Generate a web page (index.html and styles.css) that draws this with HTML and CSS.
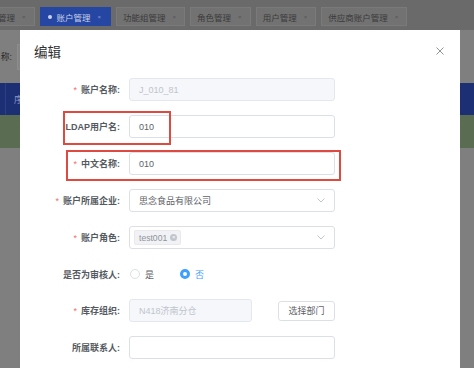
FILE: index.html
```html
<!DOCTYPE html>
<html lang="zh-CN">
<head>
    <meta charset="UTF-8">
    <title>账户管理 - 编辑</title>
    <link rel="stylesheet" href="styles.css">
</head>
<body>
    <div class="app">
        <div class="tabs">
            <div class="tab tab-cut">权限管理<span class="tab-close">×</span></div>
            <div class="tab active"><span class="dot"></span>账户管理<span class="tab-close">×</span></div>
            <div class="tab">功能组管理<span class="tab-close">×</span></div>
            <div class="tab">角色管理<span class="tab-close">×</span></div>
            <div class="tab">用户管理<span class="tab-close">×</span></div>
            <div class="tab">供应商账户管理<span class="tab-close">×</span></div>
        </div>
        <div class="toolbar">
            <span class="toolbar-label">名称:</span>
            <span class="toolbar-input"></span>
        </div>
        <div class="thead">
            <span class="th-first"></span>
            <span class="th">序号</span>
        </div>
        <div class="trow"></div>
    </div>

    <div class="dialog">
        <div class="dialog-header">
            <span class="dialog-title">编辑</span>
            <svg class="dialog-close" width="8" height="8" viewBox="0 0 8 8">
                <path d="M0.5 0.5 L7.5 7.5 M7.5 0.5 L0.5 7.5" stroke="#909399" stroke-width="1" fill="none"/>
            </svg>
        </div>
        <form class="form">
            <div class="row">
                <label class="label req">账户名称:</label>
                <input class="input" type="text" value="J_010_81" disabled>
            </div>
            <div class="row">
                <label class="label">LDAP用户名:</label>
                <input class="input" type="text" value="010">
            </div>
            <div class="row">
                <label class="label req">中文名称:</label>
                <input class="input" type="text" value="010">
            </div>
            <div class="row">
                <label class="label req">账户所属企业:</label>
                <div class="select">
                    <span class="select-text">思念食品有限公司</span>
                    <svg class="arrow" width="8" height="5" viewBox="0 0 8 5">
                        <polyline points="0.5,0.5 4,4 7.5,0.5" stroke="#c0c4cc" stroke-width="1" fill="none"/>
                    </svg>
                </div>
            </div>
            <div class="row">
                <label class="label req">账户角色:</label>
                <div class="select select-tags">
                    <span class="tag">test001<span class="tag-close">×</span></span>
                    <svg class="arrow" width="8" height="5" viewBox="0 0 8 5">
                        <polyline points="0.5,0.5 4,4 7.5,0.5" stroke="#c0c4cc" stroke-width="1" fill="none"/>
                    </svg>
                </div>
            </div>
            <div class="row row-radio">
                <label class="label">是否为审核人:</label>
                <span class="radio"><span class="radio-dot"></span>是</span>
                <span class="radio checked"><span class="radio-dot"></span>否</span>
            </div>
            <div class="row">
                <label class="label req">库存组织:</label>
                <input class="input input-short" type="text" value="N418济南分仓" disabled>
                <button class="btn" type="button">选择部门</button>
            </div>
            <div class="row">
                <label class="label">所属联系人:</label>
                <input class="input" type="text" value="">
            </div>
        </form>
    </div>

    <div class="mark mark-ldap"></div>
    <div class="mark mark-name"></div>
</body>
</html>
```

FILE: styles.css
```css
body {
    margin: 0;
    width: 474px;
    height: 368px;
    overflow: hidden;
    position: relative;
    background: #7f7f7f;
    font-family: "Liberation Sans", "Noto Sans CJK SC", sans-serif;
}

/* dimmed page behind the dialog */
.tabs {
    height: 30px;
    box-sizing: border-box;
    padding-top: 7px;
    background: #6a6a6a;
    display: flex;
    align-items: flex-start;
    gap: 5px;
    overflow: hidden;
}
.tab {
    flex: none;
    height: 19px;
    box-sizing: border-box;
    padding: 0 8px 0 6px;
    display: flex;
    align-items: center;
    background: #727272;
    border: 1px solid #7a7a7a;
    color: #3a3a3a;
    font-size: 8.5px;
    white-space: nowrap;
}
.tab-cut {
    margin-left: -26px;
}
.tab-close {
    margin-left: 7px;
    font-size: 6px;
    color: #555555;
}
.tab.active {
    background: #2546a3;
    border-color: #2546a3;
    color: #c9d1ea;
    padding-left: 7px;
    padding-right: 9px;
}
.tab.active .tab-close {
    color: #8c9dd0;
}
.dot {
    width: 4px;
    height: 4px;
    border-radius: 50%;
    background: #c9d1ea;
    margin-right: 5px;
}
.toolbar {
    height: 53px;
    display: flex;
    align-items: center;
    background: #7f7f7f;
}
.toolbar-label {
    margin-left: -8px;
    font-size: 8.8px;
    color: #2a2a2a;
}
.toolbar-input {
    margin-left: 5px;
    width: 40px;
    height: 26px;
    box-sizing: border-box;
    background: #858585;
    border: 1px solid #8c8c8c;
}
.thead {
    height: 32px;
    display: flex;
    align-items: center;
    background: #1d2f74;
}
.th-first {
    width: 5px;
    height: 32px;
    border-right: 1px solid #2d3f84;
}
.th {
    margin-left: 8px;
    font-size: 8.8px;
    color: #8d9cc6;
}
.trow {
    height: 33px;
    background: #5a6d53;
}

/* dialog */
.dialog {
    position: absolute;
    left: 20px;
    top: 30px;
    width: 440px;
    height: 338px;
    background: #ffffff;
}
.dialog-header {
    display: flex;
    justify-content: space-between;
    align-items: flex-start;
    padding: 14px 16px 0 14px;
}
.dialog-title {
    font-size: 13.5px;
    line-height: 18px;
    color: #303133;
}
.dialog-close {
    margin-top: 3px;
}
.form {
    margin: 0;
    padding-top: 16px;
}
.row {
    display: flex;
    align-items: center;
    height: 23px;
    margin-bottom: 14px;
}
.row-radio {
    height: 22px;
}
.label {
    width: 109px;
    box-sizing: border-box;
    padding-right: 9px;
    text-align: right;
    font-size: 9px;
    font-weight: 700;
    color: #555a61;
    white-space: nowrap;
}
.req::before {
    content: "*";
    color: #f56c6c;
    margin-right: 4px;
    font-weight: 400;
}
.input,
.select {
    width: 206px;
    height: 23px;
    box-sizing: border-box;
    margin: 0;
    padding: 0 9px;
    border: 1px solid #dcdfe6;
    border-radius: 3px;
    background: #ffffff;
    font-family: inherit;
    font-size: 9px;
    color: #606266;
    outline: none;
}
.input:disabled {
    background: #f5f7fa;
    border-color: #e4e7ed;
    color: #c0c4cc;
}
.input-short {
    width: 123px;
}
.select {
    display: flex;
    align-items: center;
    justify-content: space-between;
}
.select-tags {
    padding-left: 4px;
}
.arrow {
    flex: none;
}
.tag {
    display: flex;
    align-items: center;
    height: 13px;
    padding: 0 3px 0 4px;
    background: #f0f2f5;
    border: 1px solid #e9e9eb;
    border-radius: 2px;
    font-size: 8.6px;
    color: #909399;
}
.tag-close {
    width: 7px;
    height: 7px;
    margin-left: 3px;
    border-radius: 50%;
    background: #c0c4cc;
    color: #ffffff;
    font-size: 6px;
    line-height: 7px;
    text-align: center;
}
.radio {
    display: flex;
    align-items: center;
    margin-left: 1px;
    margin-right: 26px;
    font-size: 9px;
    color: #606266;
}
.radio-dot {
    width: 10px;
    height: 10px;
    box-sizing: border-box;
    margin-right: 5px;
    border: 1px solid #dcdfe6;
    border-radius: 50%;
    background: #ffffff;
}
.radio.checked {
    margin-left: 0;
    color: #409eff;
}
.radio.checked .radio-dot {
    border: 3px solid #409eff;
}
.btn {
    margin-left: 26px;
    width: 57px;
    height: 20px;
    padding: 0;
    border: 1px solid #dcdfe6;
    border-radius: 3px;
    background: #ffffff;
    font-family: inherit;
    font-size: 9px;
    color: #606266;
}

/* red annotation boxes */
.mark {
    position: absolute;
    box-sizing: border-box;
    border: 2px solid #df4a40;
}
.mark-ldap {
    left: 63px;
    top: 111px;
    width: 108px;
    height: 34px;
}
.mark-name {
    left: 66px;
    top: 150px;
    width: 275px;
    height: 31px;
}
```
